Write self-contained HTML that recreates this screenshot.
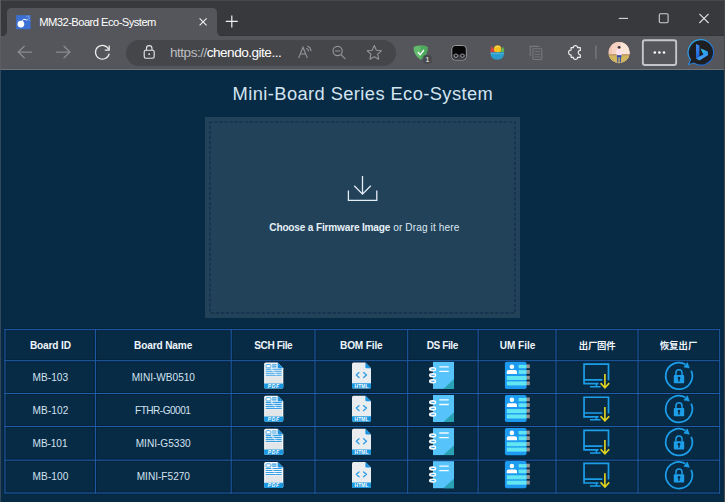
<!DOCTYPE html>
<html lang="en">
<head>
<meta charset="utf-8">
<title>MM32-Board Eco-System</title>
<style>
html,body{margin:0;padding:0;}
body{width:725px;height:502px;overflow:hidden;position:relative;background:#072a45;font-family:"Liberation Sans","Noto Sans CJK SC",sans-serif;}
.abs{position:absolute;}
#titlebar{left:0;top:0;width:725px;height:36px;background:#38393d;border-bottom:0;box-shadow:inset 0 -1px 0 #323337;}
#toolbar{left:0;top:36px;width:725px;height:34px;background:#55565b;}
#tab{left:7px;top:8px;width:210px;height:28px;background:#55565b;border-radius:4.5px 4.5px 0 0;}
#pill{left:126px;top:39.5px;width:270px;height:26.5px;border-radius:13.5px;background:#45464a;}
.t,.t2{position:absolute;white-space:nowrap;line-height:1;}
#page{left:0;top:70px;width:725px;height:432px;background:#072a45;}
#box{left:205px;top:117px;width:315px;height:201px;background:#224259;}
</style>
</head>
<body>
<div id="page" class="abs"></div>
<div id="titlebar" class="abs"></div>
<div id="toolbar" class="abs"></div>
<div id="tab" class="abs"></div>
<div id="pill" class="abs"></div>



<!--CHROME-START-->
<svg class="abs" style="left:0;top:0" width="725" height="70" viewBox="0 0 725 70">
 <!-- tab outward curves -->
 <path d="M2,36 Q7,36 7,31 V36Z M217,36 V31 Q217,36 222,36Z" fill="#55565b"/>
 <!-- favicon -->
 <rect x="16.2" y="15.2" width="14.4" height="14" fill="#3c70d2"/>
 <circle cx="20.9" cy="24.1" r="3.4" fill="#fff"/>
 <path d="M22,20.9 Q23.2,18.6 25.2,19.5 T27.6,19.6" fill="none" stroke="#fff" stroke-width="1"/>
 <path d="M27.6,17 L29.6,15.8 M28.4,18.4 L30,18 M26.6,16.6 L27,15.6 M28.6,20.2 L29.8,20.6" stroke="#a9c4f0" stroke-width="0.7"/>
 <!-- tab close -->
 <path d="M199.6,18.4 L206.6,25.4 M206.6,18.4 L199.6,25.4" stroke="#f0f0f0" stroke-width="1.1"/>
 <!-- new tab plus -->
 <path d="M225.8,21.4 H237.8 M231.8,15.4 V27.4" stroke="#f0f0f0" stroke-width="1.2"/>
 <!-- window controls -->
 <path d="M618.8,18.4 H628" stroke="#d8d8d8" stroke-width="1.1"/>
 <rect x="659.3" y="13.8" width="8.8" height="9" rx="1.2" fill="none" stroke="#d0d0d0" stroke-width="1.1"/>
 <path d="M699.4,13.8 L708.6,23 M708.6,13.8 L699.4,23" stroke="#e0e0e0" stroke-width="1.1"/>
 <!-- back / forward -->
 <g fill="none" stroke="#8a8b90" stroke-width="1.25" stroke-linecap="round" stroke-linejoin="round">
  <path d="M31.6,52 H18.4 M24.2,46.2 L18.2,52 L24.2,57.8"/>
  <path d="M56.4,52 H69.8 M64,46.2 L70,52 L64,57.8"/>
 </g>
 <!-- refresh -->
 <g transform="translate(0.6,0)"><path d="M108.2,49.6 A6.9,6.9 0 1 0 108.6,53.6" fill="none" stroke="#ececec" stroke-width="1.25"/>
 <path d="M108.6,45.6 V50 H104.2" fill="none" stroke="#ececec" stroke-width="1.25"/></g>
 <!-- lock -->
 <rect x="144.2" y="50.2" width="10" height="8" rx="1.6" fill="none" stroke="#e4e4e4" stroke-width="1.15"/>
 <path d="M146.4,50.2 V48.4 A2.8,2.8 0 0 1 152,48.4 V50.2" fill="none" stroke="#e4e4e4" stroke-width="1.15"/>
 <circle cx="149.2" cy="54.2" r="0.9" fill="#e4e4e4"/>
 <!-- read aloud A -->
 <g fill="none" stroke="#94959a" stroke-width="1.1" stroke-linecap="round">
  <path d="M298.8,57.6 L303,47.2 L307.2,57.6 M300.4,54 H305.6"/>
  <path d="M306.6,48.6 Q308.2,49.2 308.6,51 M307.8,46.2 Q310.6,47.4 311,50.6"/>
 </g>
 <!-- zoom out -->
 <g fill="none" stroke="#94959a" stroke-width="1.15" stroke-linecap="round">
  <circle cx="337.6" cy="51" r="4.6"/><path d="M341,54.6 L345,58.6 M335.4,51 H339.8"/>
 </g>
 <!-- star -->
 <path d="M374.3,45.6 L376.4,50.2 L381.4,50.8 L377.7,54.2 L378.7,59.2 L374.3,56.7 L369.9,59.2 L370.9,54.2 L367.2,50.8 L372.2,50.2Z" fill="none" stroke="#94959a" stroke-width="1.1" stroke-linejoin="round"/>
 <!-- adguard shield -->
 <path d="M420.6,45.6 Q424.4,45.6 427.6,47 Q428,55 420.6,59.8 Q413.2,55 413.6,47 Q416.8,45.6 420.6,45.6Z" fill="#62bb6d"/>
 <path d="M420.6,45.6 Q424.4,45.6 427.6,47 Q428,55 420.6,59.8Z" fill="#4da95c"/>
 <path d="M417.8,52.3 L420.3,54.8 L423.9,50" fill="none" stroke="#fff" stroke-width="1.4"/>
 <rect x="423.3" y="55.2" width="8.2" height="8.4" rx="1.6" fill="#46474b"/>
 <!-- tampermonkey-like -->
 <rect x="451.8" y="45.5" width="14.5" height="14.5" rx="3.4" fill="#060606" stroke="#9c9c9f" stroke-width="1"/>
 <path d="M452.4,54.4 H465.8 V56.6 Q465.8,59.4 463,59.4 H455.2 Q452.4,59.4 452.4,56.6Z" fill="#3a3b3e"/>
 <circle cx="455.9" cy="55.7" r="1.75" fill="#1c1d20" stroke="#a9adb6" stroke-width="0.85"/>
 <circle cx="462.4" cy="55.7" r="1.75" fill="#1c1d20" stroke="#a9adb6" stroke-width="0.85"/>
 <!-- fruit bowl -->
 <path d="M490.6,52.3 L491.6,46.8 L496.4,52.3Z" fill="#d8473f" stroke="#d8473f" stroke-width="0.8" stroke-linejoin="round"/>
 <path d="M500.6,52.3 Q501.6,47.6 503.2,46.9 Q504.8,49.6 503.9,52.3Z" fill="#5fb653"/>
 <circle cx="497.6" cy="49" r="3.7" fill="#f4c01e"/>
 <path d="M495.2,47.4 Q497.4,45.8 499.8,46.8" fill="none" stroke="#f9dc6a" stroke-width="1"/>
 <path d="M490.4,52.3 H504.2 Q504,59.8 497.3,59.8 Q490.6,59.8 490.4,52.3Z" fill="#2b9dcc"/>
 <path d="M490.5,53.6 H504.1" stroke="#4fb4dc" stroke-width="1"/>
 <!-- collections (dim) -->
 <g fill="none" stroke="#77787d" stroke-width="1.1">
  <path d="M530.2,56.2 V46.4 H539.2"/><rect x="532.9" y="48.7" width="8.9" height="10.8" rx="0.8"/>
  <path d="M534.6,51.6 H540.2 M534.6,54.4 H540.2 M534.6,57 H540.2" stroke-width="0.9"/>
 </g>
 <!-- extensions puzzle -->
 <path d="M571.1,47.7 H573.4 C572.6,44.9 578.3,44.9 577.5,47.7 H580.3 V50.4 C577.6,49.8 577.6,55.3 580.3,54.8 V57.3 H577.5 C578.3,60.1 572.6,60.1 573.4,57.3 H571.1 V54.9 C567.8,55.6 567.8,49.4 571.1,50.1Z" fill="none" stroke="#ededed" stroke-width="1.2" stroke-linejoin="round"/>
 <!-- separator -->
 <path d="M595.9,45.6 V59" stroke="#7f8084" stroke-width="1.1"/>
 <!-- avatar -->
 <clipPath id="avc"><circle cx="619.1" cy="52.6" r="10.6"/></clipPath>
 <g clip-path="url(#avc)">
  <rect x="608" y="41" width="23" height="23" fill="#f2c6b6"/>
  <rect x="612" y="41" width="9" height="14" fill="#f5d2c2"/>
  <rect x="621" y="41" width="10" height="14" fill="#fae6d6"/>
  <rect x="608" y="54.6" width="23" height="10" fill="#d2b65e"/>
  <rect x="608" y="54.2" width="23" height="1.2" fill="#b98f6a"/>
  <path d="M615.6,53.4 L616.6,49.6 Q619.1,48.2 621.6,49.6 L622.7,53.4 L621.6,53.6 V55.6 H616.7 V53.6Z" fill="#fbe3ec"/>
  <circle cx="619.1" cy="47.3" r="1.35" fill="#3a2f3c"/>
  <rect x="616.9" y="55.2" width="4.5" height="2.3" fill="#2a49b4"/>
  <path d="M617.8,57.4 V62.4 M620.4,57.4 V62.4" stroke="#3653ad" stroke-width="1.2"/>
 </g>
 <!-- more button -->
 <rect x="642.85" y="40.25" width="33.3" height="24.7" rx="2" fill="none" stroke="#c5c6c9" stroke-width="1.9"/>
 <circle cx="654.8" cy="52.4" r="1.25" fill="#fff"/><circle cx="659.4" cy="52.4" r="1.25" fill="#fff"/><circle cx="664" cy="52.4" r="1.25" fill="#fff"/>
 <!-- bing -->
 <linearGradient id="bg1" x1="0" y1="0" x2="1" y2="1"><stop offset="0" stop-color="#35b8f0"/><stop offset="1" stop-color="#1557d6"/></linearGradient>
 <linearGradient id="bg2" x1="0" y1="0" x2="0" y2="1"><stop offset="0" stop-color="#3b8cf2"/><stop offset="1" stop-color="#1c5fd6"/></linearGradient>
 <linearGradient id="bg3" x1="0" y1="0" x2="1" y2="1"><stop offset="0" stop-color="#2fd0ea"/><stop offset="1" stop-color="#2a86ea"/></linearGradient>
 <path d="M700.85,39.1 A13.3,13.3 0 1 1 693.6,63.6 L687.7,65.2 L689.9,60 A13.3,13.3 0 0 1 700.85,39.1Z" fill="url(#bg1)"/>
 <path d="M700.85,40.2 A12.2,12.2 0 1 1 694,62.5 L689.6,63.8 L691.1,59.6 A12.2,12.2 0 0 1 700.85,40.2Z" fill="#1e1f22"/>
 <path d="M696,44.1 L699.4,45.4 V56.6 L696,58.4Z" fill="url(#bg2)"/>
 <path d="M700.6,48.6 L707.9,51.4 V55 L703.6,54.7 L702.2,51.9Z" fill="url(#bg3)"/>
 <path d="M696,58.4 L699.4,56.6 L707.9,52.2 V55.3 L699.6,60.4Z" fill="#3a9cf2"/>
 <!-- borders -->
 <rect x="0" y="0" width="725" height="1" fill="#47484b"/>
 <rect x="0" y="69" width="725" height="1" fill="#6f7378"/>
</svg>
<span class="t2" style="left:425.3px;top:55.6px;font-size:7.8px;color:#ececec;">1</span>
<div class="abs" style="left:0;top:0;width:1px;height:70px;background:#5c5d60"></div>
<div class="abs" style="left:0;top:70px;width:1px;height:432px;background:#34485b"></div>
<div class="abs" style="left:724px;top:0;width:1px;height:502px;background:#47484b"></div>
<!--CHROME-END-->
<div id="box" class="abs"></div>
<svg class="abs" style="left:205px;top:117px" width="315" height="201"><rect x="5" y="5" width="304.9" height="190.9" fill="none" stroke="#14334d" stroke-width="1.6" stroke-dasharray="3.3 1.78" stroke-dashoffset="0.9"/></svg>

<svg class="abs" style="left:340px;top:170px" width="46" height="36" viewBox="340 170 46 36"><g fill="none" stroke="#e3edf5" stroke-width="1.3"><path d="M348.4,190.6 V200.3 H376.8 V190.6"/><path d="M362.5,176 V194 M354.2,185.8 L362.5,194.1 L370.8,185.8"/></g></svg>
<!-- table lines -->
<svg class="abs" style="left:0;top:320px" width="725" height="182" viewBox="0 320 725 182">
<g stroke="#03192c" stroke-opacity="0.4" stroke-width="3" fill="none">
<line x1="4.45" x2="720.25" y1="329.65" y2="329.65"/>
<line x1="4.45" x2="720.25" y1="360.7" y2="360.7"/>
<line x1="4.45" x2="720.25" y1="393.5" y2="393.5"/>
<line x1="4.45" x2="720.25" y1="426.5" y2="426.5"/>
<line x1="4.45" x2="720.25" y1="460.2" y2="460.2"/>
<line x1="4.45" x2="720.25" y1="493" y2="493"/>
<line x1="5" x2="5" y1="329.1" y2="493.55"/>
<line x1="95.4" x2="95.4" y1="329.1" y2="493.55"/>
<line x1="231.2" x2="231.2" y1="329.1" y2="493.55"/>
<line x1="315" x2="315" y1="329.1" y2="493.55"/>
<line x1="407.7" x2="407.7" y1="329.1" y2="493.55"/>
<line x1="478.1" x2="478.1" y1="329.1" y2="493.55"/>
<line x1="556" x2="556" y1="329.1" y2="493.55"/>
<line x1="638" x2="638" y1="329.1" y2="493.55"/>
<line x1="719.7" x2="719.7" y1="329.1" y2="493.55"/>
</g><g stroke="#205eac" stroke-width="1.0" fill="none">
<line x1="4.45" x2="720.25" y1="329.65" y2="329.65"/>
<line x1="4.45" x2="720.25" y1="360.7" y2="360.7"/>
<line x1="4.45" x2="720.25" y1="393.5" y2="393.5"/>
<line x1="4.45" x2="720.25" y1="426.5" y2="426.5"/>
<line x1="4.45" x2="720.25" y1="460.2" y2="460.2"/>
<line x1="4.45" x2="720.25" y1="493" y2="493"/>
<line x1="5" x2="5" y1="329.1" y2="493.55"/>
<line x1="95.4" x2="95.4" y1="329.1" y2="493.55"/>
<line x1="231.2" x2="231.2" y1="329.1" y2="493.55"/>
<line x1="315" x2="315" y1="329.1" y2="493.55"/>
<line x1="407.7" x2="407.7" y1="329.1" y2="493.55"/>
<line x1="478.1" x2="478.1" y1="329.1" y2="493.55"/>
<line x1="556" x2="556" y1="329.1" y2="493.55"/>
<line x1="638" x2="638" y1="329.1" y2="493.55"/>
<line x1="719.7" x2="719.7" y1="329.1" y2="493.55"/>
</g></svg>
<!--ICONS-START-->
<svg class="abs" style="left:0;top:355px" width="725" height="147" viewBox="0 355 725 147">
<g transform="translate(264.1,362.6)">
 <path d="M0,1.6 Q0,0 1.6,0 L13.6,0 L19.2,5.6 L19.2,24.4 Q19.2,26 17.6,26 L1.6,26 Q0,26 0,24.4Z" fill="#f4f6f7"/>
 <rect x="1.4" y="13.6" width="16.4" height="7.2" fill="#e3e6e8"/>
 <path d="M0,20.8 H19.2 V24.4 Q19.2,26 17.6,26 H1.6 Q0,26 0,24.4Z" fill="#1a97e1"/>
 <path d="M13.6,0 L19.2,5.6 H14.6 Q13.6,5.6 13.6,4.6Z" fill="#1b90dd"/>
 <rect x="1.9" y="1.9" width="4.9" height="3.3" rx="0.9" fill="#fff" stroke="#3aa3e6" stroke-width="0.9"/>
 <g stroke="#369fe5" stroke-width="1.15">
  <path d="M8,2.2H12.4M8,4.2H12.4M1.6,6.6H17.6M1.6,8.6H17.6M1.6,10.6H17.6M1.6,12.6H17.6"/>
 </g>
 <path d="M7.5,6 L12.5,12.8" stroke="#f2f8fc" stroke-width="1.7" stroke-dasharray="1.2 0.9"/>
 <text x="9.6" y="25.2" font-family="Liberation Sans, sans-serif" font-size="5" font-weight="bold" font-style="italic" fill="#ffffff" text-anchor="middle" letter-spacing="0.7">PDF</text>
</g>
<g transform="translate(352,362.6)">
 <path d="M0,1.6 Q0,0 1.6,0 L13.4,0 L19,5.6 L19,24.4 Q19,26 17.4,26 L1.6,26 Q0,26 0,24.4Z" fill="#e9edef"/>
 <path d="M0,20.6 H19 V24.4 Q19,26 17.4,26 H1.6 Q0,26 0,24.4Z" fill="#1a97e1"/>
 <path d="M13.4,0 L19,5.6 H14.4 Q13.4,5.6 13.4,4.6Z" fill="#1b93df"/>
 <path d="M7,10 L4.3,12.4 L7,14.9 M11.6,10 L14.5,12.4 L11.6,14.9" fill="none" stroke="#2f9de5" stroke-width="1.35" stroke-linecap="round" stroke-linejoin="round"/>
 <text x="9.6" y="25" font-family="Liberation Sans, sans-serif" font-size="4.9" font-weight="bold" fill="#ffffff" text-anchor="middle" letter-spacing="0.1">HTML</text>
</g>
<g transform="translate(429,361.9)">
 <rect x="4" y="0" width="21" height="27" fill="#56c4fa"/>
 <path d="M25,17.2 V27 H14.4Z" fill="#2aa2b6"/>
 <path d="M10.3,4.9H19.8M10.3,9.5H19.8" stroke="#f6fcff" stroke-width="1.3"/>
 <g fill="#dff3ff" stroke="#ffffff" stroke-width="1.25">
  <ellipse cx="3.6" cy="7.3" rx="3.0" ry="1.6"/>
  <ellipse cx="3.6" cy="13.4" rx="3.0" ry="1.6"/>
  <ellipse cx="3.6" cy="19.4" rx="3.0" ry="1.6"/>
 </g>
 <path d="M2.4,7.3H5.6M2.4,13.4H5.6M2.4,19.4H5.6" stroke="#2a9cf0" stroke-width="0.9"/>
</g>
<g transform="translate(504.9,361.8)">
 <g fill="#9c918c">
  <rect x="21" y="2.6" width="3.9" height="3.8"/><rect x="21" y="8.2" width="3.9" height="3.8"/>
  <rect x="21" y="14" width="3.9" height="3.8"/><rect x="21" y="19.6" width="3.9" height="3.8"/>
 </g>
 <rect x="0" y="0" width="21.6" height="27.2" rx="1.8" fill="#1c9bf1"/>
 <circle cx="7" cy="4.9" r="2.3" fill="#fff"/>
 <path d="M1.9,12.2 V10 Q1.9,8.3 3.8,8.3 H10.2 Q12.1,8.3 12.1,10 V12.2Z" fill="#fff"/>
 <g fill="#62e6f2">
  <rect x="13.7" y="3" width="7.9" height="3.4"/><rect x="13.7" y="8.4" width="7.9" height="3.7"/>
  <rect x="1.9" y="14.2" width="19.7" height="4"/><rect x="1.9" y="19.6" width="19.7" height="4"/>
 </g>
</g>
<g transform="translate(583.2,363.3)" fill="none">
 <path d="M19.2,16.6 H0.85 V0.85 H25.3 V17" stroke="#1c9ee9" stroke-width="1.7"/>
 <path d="M0.85,16.6 V20.4 H15.4" stroke="#1c9ee9" stroke-width="1.7"/>
 <path d="M13.2,20.4 V23.4 M6.8,23.4 H17.4" stroke="#1c9ee9" stroke-width="1.5"/>
 <path d="M21.7,10.6 V24.2 M17.4,19.8 L21.7,24.4 L26,19.8" stroke="#e0d322" stroke-width="1.65"/>
</g>
<g transform="translate(679,375.9)">
 <path d="M12.19,-5.32 A13.3,13.3 0 1 1 6.3,-11.7" fill="none" stroke="#1c9ee9" stroke-width="1.75"/>
 <path d="M8.3,-13.3 L4.9,-8.9 L10.3,-7.9Z" fill="#1c9ee9" stroke="#1c9ee9" stroke-width="0.6" stroke-linejoin="round"/>
 <path d="M-3.05,-0.6 V-3 A3.05,3.2 0 0 1 3.05,-3 V-0.6" fill="none" stroke="#1c9ee9" stroke-width="1.5"/>
 <rect x="-5.2" y="-0.9" width="10.4" height="8.2" rx="0.9" fill="#1c9ee9"/>
 <circle cx="0" cy="2.1" r="1.3" fill="#082b47"/><rect x="-0.7" y="2.4" width="1.4" height="3.2" fill="#082b47"/>
</g>
<g transform="translate(264.1,395.7)">
 <path d="M0,1.6 Q0,0 1.6,0 L13.6,0 L19.2,5.6 L19.2,24.4 Q19.2,26 17.6,26 L1.6,26 Q0,26 0,24.4Z" fill="#f4f6f7"/>
 <rect x="1.4" y="13.6" width="16.4" height="7.2" fill="#e3e6e8"/>
 <path d="M0,20.8 H19.2 V24.4 Q19.2,26 17.6,26 H1.6 Q0,26 0,24.4Z" fill="#1a97e1"/>
 <path d="M13.6,0 L19.2,5.6 H14.6 Q13.6,5.6 13.6,4.6Z" fill="#1b90dd"/>
 <rect x="1.9" y="1.9" width="4.9" height="3.3" rx="0.9" fill="#fff" stroke="#3aa3e6" stroke-width="0.9"/>
 <g stroke="#369fe5" stroke-width="1.15">
  <path d="M8,2.2H12.4M8,4.2H12.4M1.6,6.6H17.6M1.6,8.6H17.6M1.6,10.6H17.6M1.6,12.6H17.6"/>
 </g>
 <path d="M7.5,6 L12.5,12.8" stroke="#f2f8fc" stroke-width="1.7" stroke-dasharray="1.2 0.9"/>
 <text x="9.6" y="25.2" font-family="Liberation Sans, sans-serif" font-size="5" font-weight="bold" font-style="italic" fill="#ffffff" text-anchor="middle" letter-spacing="0.7">PDF</text>
</g>
<g transform="translate(352,395.7)">
 <path d="M0,1.6 Q0,0 1.6,0 L13.4,0 L19,5.6 L19,24.4 Q19,26 17.4,26 L1.6,26 Q0,26 0,24.4Z" fill="#e9edef"/>
 <path d="M0,20.6 H19 V24.4 Q19,26 17.4,26 H1.6 Q0,26 0,24.4Z" fill="#1a97e1"/>
 <path d="M13.4,0 L19,5.6 H14.4 Q13.4,5.6 13.4,4.6Z" fill="#1b93df"/>
 <path d="M7,10 L4.3,12.4 L7,14.9 M11.6,10 L14.5,12.4 L11.6,14.9" fill="none" stroke="#2f9de5" stroke-width="1.35" stroke-linecap="round" stroke-linejoin="round"/>
 <text x="9.6" y="25" font-family="Liberation Sans, sans-serif" font-size="4.9" font-weight="bold" fill="#ffffff" text-anchor="middle" letter-spacing="0.1">HTML</text>
</g>
<g transform="translate(429,395.0)">
 <rect x="4" y="0" width="21" height="27" fill="#56c4fa"/>
 <path d="M25,17.2 V27 H14.4Z" fill="#2aa2b6"/>
 <path d="M10.3,4.9H19.8M10.3,9.5H19.8" stroke="#f6fcff" stroke-width="1.3"/>
 <g fill="#dff3ff" stroke="#ffffff" stroke-width="1.25">
  <ellipse cx="3.6" cy="7.3" rx="3.0" ry="1.6"/>
  <ellipse cx="3.6" cy="13.4" rx="3.0" ry="1.6"/>
  <ellipse cx="3.6" cy="19.4" rx="3.0" ry="1.6"/>
 </g>
 <path d="M2.4,7.3H5.6M2.4,13.4H5.6M2.4,19.4H5.6" stroke="#2a9cf0" stroke-width="0.9"/>
</g>
<g transform="translate(504.9,394.9)">
 <g fill="#9c918c">
  <rect x="21" y="2.6" width="3.9" height="3.8"/><rect x="21" y="8.2" width="3.9" height="3.8"/>
  <rect x="21" y="14" width="3.9" height="3.8"/><rect x="21" y="19.6" width="3.9" height="3.8"/>
 </g>
 <rect x="0" y="0" width="21.6" height="27.2" rx="1.8" fill="#1c9bf1"/>
 <circle cx="7" cy="4.9" r="2.3" fill="#fff"/>
 <path d="M1.9,12.2 V10 Q1.9,8.3 3.8,8.3 H10.2 Q12.1,8.3 12.1,10 V12.2Z" fill="#fff"/>
 <g fill="#62e6f2">
  <rect x="13.7" y="3" width="7.9" height="3.4"/><rect x="13.7" y="8.4" width="7.9" height="3.7"/>
  <rect x="1.9" y="14.2" width="19.7" height="4"/><rect x="1.9" y="19.6" width="19.7" height="4"/>
 </g>
</g>
<g transform="translate(583.2,396.4)" fill="none">
 <path d="M19.2,16.6 H0.85 V0.85 H25.3 V17" stroke="#1c9ee9" stroke-width="1.7"/>
 <path d="M0.85,16.6 V20.4 H15.4" stroke="#1c9ee9" stroke-width="1.7"/>
 <path d="M13.2,20.4 V23.4 M6.8,23.4 H17.4" stroke="#1c9ee9" stroke-width="1.5"/>
 <path d="M21.7,10.6 V24.2 M17.4,19.8 L21.7,24.4 L26,19.8" stroke="#e0d322" stroke-width="1.65"/>
</g>
<g transform="translate(679,409.0)">
 <path d="M12.19,-5.32 A13.3,13.3 0 1 1 6.3,-11.7" fill="none" stroke="#1c9ee9" stroke-width="1.75"/>
 <path d="M8.3,-13.3 L4.9,-8.9 L10.3,-7.9Z" fill="#1c9ee9" stroke="#1c9ee9" stroke-width="0.6" stroke-linejoin="round"/>
 <path d="M-3.05,-0.6 V-3 A3.05,3.2 0 0 1 3.05,-3 V-0.6" fill="none" stroke="#1c9ee9" stroke-width="1.5"/>
 <rect x="-5.2" y="-0.9" width="10.4" height="8.2" rx="0.9" fill="#1c9ee9"/>
 <circle cx="0" cy="2.1" r="1.3" fill="#082b47"/><rect x="-0.7" y="2.4" width="1.4" height="3.2" fill="#082b47"/>
</g>
<g transform="translate(264.1,428.8)">
 <path d="M0,1.6 Q0,0 1.6,0 L13.6,0 L19.2,5.6 L19.2,24.4 Q19.2,26 17.6,26 L1.6,26 Q0,26 0,24.4Z" fill="#f4f6f7"/>
 <rect x="1.4" y="13.6" width="16.4" height="7.2" fill="#e3e6e8"/>
 <path d="M0,20.8 H19.2 V24.4 Q19.2,26 17.6,26 H1.6 Q0,26 0,24.4Z" fill="#1a97e1"/>
 <path d="M13.6,0 L19.2,5.6 H14.6 Q13.6,5.6 13.6,4.6Z" fill="#1b90dd"/>
 <rect x="1.9" y="1.9" width="4.9" height="3.3" rx="0.9" fill="#fff" stroke="#3aa3e6" stroke-width="0.9"/>
 <g stroke="#369fe5" stroke-width="1.15">
  <path d="M8,2.2H12.4M8,4.2H12.4M1.6,6.6H17.6M1.6,8.6H17.6M1.6,10.6H17.6M1.6,12.6H17.6"/>
 </g>
 <path d="M7.5,6 L12.5,12.8" stroke="#f2f8fc" stroke-width="1.7" stroke-dasharray="1.2 0.9"/>
 <text x="9.6" y="25.2" font-family="Liberation Sans, sans-serif" font-size="5" font-weight="bold" font-style="italic" fill="#ffffff" text-anchor="middle" letter-spacing="0.7">PDF</text>
</g>
<g transform="translate(352,428.8)">
 <path d="M0,1.6 Q0,0 1.6,0 L13.4,0 L19,5.6 L19,24.4 Q19,26 17.4,26 L1.6,26 Q0,26 0,24.4Z" fill="#e9edef"/>
 <path d="M0,20.6 H19 V24.4 Q19,26 17.4,26 H1.6 Q0,26 0,24.4Z" fill="#1a97e1"/>
 <path d="M13.4,0 L19,5.6 H14.4 Q13.4,5.6 13.4,4.6Z" fill="#1b93df"/>
 <path d="M7,10 L4.3,12.4 L7,14.9 M11.6,10 L14.5,12.4 L11.6,14.9" fill="none" stroke="#2f9de5" stroke-width="1.35" stroke-linecap="round" stroke-linejoin="round"/>
 <text x="9.6" y="25" font-family="Liberation Sans, sans-serif" font-size="4.9" font-weight="bold" fill="#ffffff" text-anchor="middle" letter-spacing="0.1">HTML</text>
</g>
<g transform="translate(429,428.1)">
 <rect x="4" y="0" width="21" height="27" fill="#56c4fa"/>
 <path d="M25,17.2 V27 H14.4Z" fill="#2aa2b6"/>
 <path d="M10.3,4.9H19.8M10.3,9.5H19.8" stroke="#f6fcff" stroke-width="1.3"/>
 <g fill="#dff3ff" stroke="#ffffff" stroke-width="1.25">
  <ellipse cx="3.6" cy="7.3" rx="3.0" ry="1.6"/>
  <ellipse cx="3.6" cy="13.4" rx="3.0" ry="1.6"/>
  <ellipse cx="3.6" cy="19.4" rx="3.0" ry="1.6"/>
 </g>
 <path d="M2.4,7.3H5.6M2.4,13.4H5.6M2.4,19.4H5.6" stroke="#2a9cf0" stroke-width="0.9"/>
</g>
<g transform="translate(504.9,428.0)">
 <g fill="#9c918c">
  <rect x="21" y="2.6" width="3.9" height="3.8"/><rect x="21" y="8.2" width="3.9" height="3.8"/>
  <rect x="21" y="14" width="3.9" height="3.8"/><rect x="21" y="19.6" width="3.9" height="3.8"/>
 </g>
 <rect x="0" y="0" width="21.6" height="27.2" rx="1.8" fill="#1c9bf1"/>
 <circle cx="7" cy="4.9" r="2.3" fill="#fff"/>
 <path d="M1.9,12.2 V10 Q1.9,8.3 3.8,8.3 H10.2 Q12.1,8.3 12.1,10 V12.2Z" fill="#fff"/>
 <g fill="#62e6f2">
  <rect x="13.7" y="3" width="7.9" height="3.4"/><rect x="13.7" y="8.4" width="7.9" height="3.7"/>
  <rect x="1.9" y="14.2" width="19.7" height="4"/><rect x="1.9" y="19.6" width="19.7" height="4"/>
 </g>
</g>
<g transform="translate(583.2,429.5)" fill="none">
 <path d="M19.2,16.6 H0.85 V0.85 H25.3 V17" stroke="#1c9ee9" stroke-width="1.7"/>
 <path d="M0.85,16.6 V20.4 H15.4" stroke="#1c9ee9" stroke-width="1.7"/>
 <path d="M13.2,20.4 V23.4 M6.8,23.4 H17.4" stroke="#1c9ee9" stroke-width="1.5"/>
 <path d="M21.7,10.6 V24.2 M17.4,19.8 L21.7,24.4 L26,19.8" stroke="#e0d322" stroke-width="1.65"/>
</g>
<g transform="translate(679,442.1)">
 <path d="M12.19,-5.32 A13.3,13.3 0 1 1 6.3,-11.7" fill="none" stroke="#1c9ee9" stroke-width="1.75"/>
 <path d="M8.3,-13.3 L4.9,-8.9 L10.3,-7.9Z" fill="#1c9ee9" stroke="#1c9ee9" stroke-width="0.6" stroke-linejoin="round"/>
 <path d="M-3.05,-0.6 V-3 A3.05,3.2 0 0 1 3.05,-3 V-0.6" fill="none" stroke="#1c9ee9" stroke-width="1.5"/>
 <rect x="-5.2" y="-0.9" width="10.4" height="8.2" rx="0.9" fill="#1c9ee9"/>
 <circle cx="0" cy="2.1" r="1.3" fill="#082b47"/><rect x="-0.7" y="2.4" width="1.4" height="3.2" fill="#082b47"/>
</g>
<g transform="translate(264.1,461.9)">
 <path d="M0,1.6 Q0,0 1.6,0 L13.6,0 L19.2,5.6 L19.2,24.4 Q19.2,26 17.6,26 L1.6,26 Q0,26 0,24.4Z" fill="#f4f6f7"/>
 <rect x="1.4" y="13.6" width="16.4" height="7.2" fill="#e3e6e8"/>
 <path d="M0,20.8 H19.2 V24.4 Q19.2,26 17.6,26 H1.6 Q0,26 0,24.4Z" fill="#1a97e1"/>
 <path d="M13.6,0 L19.2,5.6 H14.6 Q13.6,5.6 13.6,4.6Z" fill="#1b90dd"/>
 <rect x="1.9" y="1.9" width="4.9" height="3.3" rx="0.9" fill="#fff" stroke="#3aa3e6" stroke-width="0.9"/>
 <g stroke="#369fe5" stroke-width="1.15">
  <path d="M8,2.2H12.4M8,4.2H12.4M1.6,6.6H17.6M1.6,8.6H17.6M1.6,10.6H17.6M1.6,12.6H17.6"/>
 </g>
 <path d="M7.5,6 L12.5,12.8" stroke="#f2f8fc" stroke-width="1.7" stroke-dasharray="1.2 0.9"/>
 <text x="9.6" y="25.2" font-family="Liberation Sans, sans-serif" font-size="5" font-weight="bold" font-style="italic" fill="#ffffff" text-anchor="middle" letter-spacing="0.7">PDF</text>
</g>
<g transform="translate(352,461.9)">
 <path d="M0,1.6 Q0,0 1.6,0 L13.4,0 L19,5.6 L19,24.4 Q19,26 17.4,26 L1.6,26 Q0,26 0,24.4Z" fill="#e9edef"/>
 <path d="M0,20.6 H19 V24.4 Q19,26 17.4,26 H1.6 Q0,26 0,24.4Z" fill="#1a97e1"/>
 <path d="M13.4,0 L19,5.6 H14.4 Q13.4,5.6 13.4,4.6Z" fill="#1b93df"/>
 <path d="M7,10 L4.3,12.4 L7,14.9 M11.6,10 L14.5,12.4 L11.6,14.9" fill="none" stroke="#2f9de5" stroke-width="1.35" stroke-linecap="round" stroke-linejoin="round"/>
 <text x="9.6" y="25" font-family="Liberation Sans, sans-serif" font-size="4.9" font-weight="bold" fill="#ffffff" text-anchor="middle" letter-spacing="0.1">HTML</text>
</g>
<g transform="translate(429,461.2)">
 <rect x="4" y="0" width="21" height="27" fill="#56c4fa"/>
 <path d="M25,17.2 V27 H14.4Z" fill="#2aa2b6"/>
 <path d="M10.3,4.9H19.8M10.3,9.5H19.8" stroke="#f6fcff" stroke-width="1.3"/>
 <g fill="#dff3ff" stroke="#ffffff" stroke-width="1.25">
  <ellipse cx="3.6" cy="7.3" rx="3.0" ry="1.6"/>
  <ellipse cx="3.6" cy="13.4" rx="3.0" ry="1.6"/>
  <ellipse cx="3.6" cy="19.4" rx="3.0" ry="1.6"/>
 </g>
 <path d="M2.4,7.3H5.6M2.4,13.4H5.6M2.4,19.4H5.6" stroke="#2a9cf0" stroke-width="0.9"/>
</g>
<g transform="translate(504.9,461.1)">
 <g fill="#9c918c">
  <rect x="21" y="2.6" width="3.9" height="3.8"/><rect x="21" y="8.2" width="3.9" height="3.8"/>
  <rect x="21" y="14" width="3.9" height="3.8"/><rect x="21" y="19.6" width="3.9" height="3.8"/>
 </g>
 <rect x="0" y="0" width="21.6" height="27.2" rx="1.8" fill="#1c9bf1"/>
 <circle cx="7" cy="4.9" r="2.3" fill="#fff"/>
 <path d="M1.9,12.2 V10 Q1.9,8.3 3.8,8.3 H10.2 Q12.1,8.3 12.1,10 V12.2Z" fill="#fff"/>
 <g fill="#62e6f2">
  <rect x="13.7" y="3" width="7.9" height="3.4"/><rect x="13.7" y="8.4" width="7.9" height="3.7"/>
  <rect x="1.9" y="14.2" width="19.7" height="4"/><rect x="1.9" y="19.6" width="19.7" height="4"/>
 </g>
</g>
<g transform="translate(583.2,462.6)" fill="none">
 <path d="M19.2,16.6 H0.85 V0.85 H25.3 V17" stroke="#1c9ee9" stroke-width="1.7"/>
 <path d="M0.85,16.6 V20.4 H15.4" stroke="#1c9ee9" stroke-width="1.7"/>
 <path d="M13.2,20.4 V23.4 M6.8,23.4 H17.4" stroke="#1c9ee9" stroke-width="1.5"/>
 <path d="M21.7,10.6 V24.2 M17.4,19.8 L21.7,24.4 L26,19.8" stroke="#e0d322" stroke-width="1.65"/>
</g>
<g transform="translate(679,475.2)">
 <path d="M12.19,-5.32 A13.3,13.3 0 1 1 6.3,-11.7" fill="none" stroke="#1c9ee9" stroke-width="1.75"/>
 <path d="M8.3,-13.3 L4.9,-8.9 L10.3,-7.9Z" fill="#1c9ee9" stroke="#1c9ee9" stroke-width="0.6" stroke-linejoin="round"/>
 <path d="M-3.05,-0.6 V-3 A3.05,3.2 0 0 1 3.05,-3 V-0.6" fill="none" stroke="#1c9ee9" stroke-width="1.5"/>
 <rect x="-5.2" y="-0.9" width="10.4" height="8.2" rx="0.9" fill="#1c9ee9"/>
 <circle cx="0" cy="2.1" r="1.3" fill="#082b47"/><rect x="-0.7" y="2.4" width="1.4" height="3.2" fill="#082b47"/>
</g>
</svg>
<!--ICONS-END-->
<span class="t" id="tabtitle" style="left:39.30px;top:17px;font-size:11.2px;color:#ffffff;font-weight:normal;letter-spacing:-0.549px">MM32-Board Eco-System</span>
<span class="t" id="url" style="left:170.00px;top:46px;font-size:13.6px;color:#ffffff;font-weight:normal;letter-spacing:-0.511px"><span style="color:#bcbdc0">https://</span>chendo.gite...</span>
<span class="t" id="h1" style="left:232.60px;top:85px;font-size:18.3px;color:#d3e4f0;font-weight:normal;letter-spacing:0.418px">Mini-Board Series Eco-System</span>
<span class="t" id="bt1" style="left:269.30px;top:223px;font-size:10.1px;color:#e6f0f7;font-weight:bold;letter-spacing:-0.182px">Choose a Firmware Image</span>
<span class="t" id="bt2" style="left:393.20px;top:223px;font-size:10.1px;color:#dce8f1;font-weight:normal;letter-spacing:0.113px">or Drag it here</span>
<span class="t" id="th1" style="left:29.90px;top:341px;font-size:10.1px;color:#eff5fa;font-weight:bold;letter-spacing:-0.137px">Board ID</span>
<span class="t" id="th2" style="left:134.00px;top:341px;font-size:10.1px;color:#eff5fa;font-weight:bold;letter-spacing:-0.130px">Board Name</span>
<span class="t" id="th3" style="left:254.30px;top:341px;font-size:10.1px;color:#eff5fa;font-weight:bold;letter-spacing:-0.445px">SCH File</span>
<span class="t" id="th4" style="left:340.00px;top:341px;font-size:10.1px;color:#eff5fa;font-weight:bold;letter-spacing:-0.150px">BOM File</span>
<span class="t" id="th5" style="left:426.70px;top:341px;font-size:10.1px;color:#eff5fa;font-weight:bold;letter-spacing:-0.436px">DS File</span>
<span class="t" id="th6" style="left:499.70px;top:341px;font-size:10.1px;color:#eff5fa;font-weight:bold;letter-spacing:-0.048px">UM File</span>
<span class="t" id="th7" style="left:578.70px;top:341px;font-size:9.4px;color:#eff5fa;font-weight:bold;letter-spacing:-0.172px">出厂固件</span>
<span class="t" id="th8" style="left:659.70px;top:341px;font-size:9.4px;color:#eff5fa;font-weight:bold;letter-spacing:0.028px">恢复出厂</span>
<span class="t" id="a1" style="left:32.60px;top:373px;font-size:10.1px;color:#d2e2ef;font-weight:normal;letter-spacing:0.011px">MB-103</span>
<span class="t" id="b1" style="left:131.70px;top:373px;font-size:10.1px;color:#d2e2ef;font-weight:normal;letter-spacing:-0.009px">MINI-WB0510</span>
<span class="t" id="a2" style="left:32.60px;top:406px;font-size:10.1px;color:#d2e2ef;font-weight:normal;letter-spacing:0.071px">MB-102</span>
<span class="t" id="b2" style="left:135.00px;top:406px;font-size:10.1px;color:#d2e2ef;font-weight:normal;letter-spacing:-0.520px">FTHR-G0001</span>
<span class="t" id="a3" style="left:32.60px;top:439px;font-size:10.1px;color:#d2e2ef;font-weight:normal;letter-spacing:-0.089px">MB-101</span>
<span class="t" id="b3" style="left:135.70px;top:439px;font-size:10.1px;color:#d2e2ef;font-weight:normal;letter-spacing:0.002px">MINI-G5330</span>
<span class="t" id="a4" style="left:32.60px;top:472px;font-size:10.1px;color:#d2e2ef;font-weight:normal;letter-spacing:0.071px">MB-100</span>
<span class="t" id="b4" style="left:136.70px;top:472px;font-size:10.1px;color:#d2e2ef;font-weight:normal;letter-spacing:0.000px">MINI-F5270</span>
</body>
</html>
